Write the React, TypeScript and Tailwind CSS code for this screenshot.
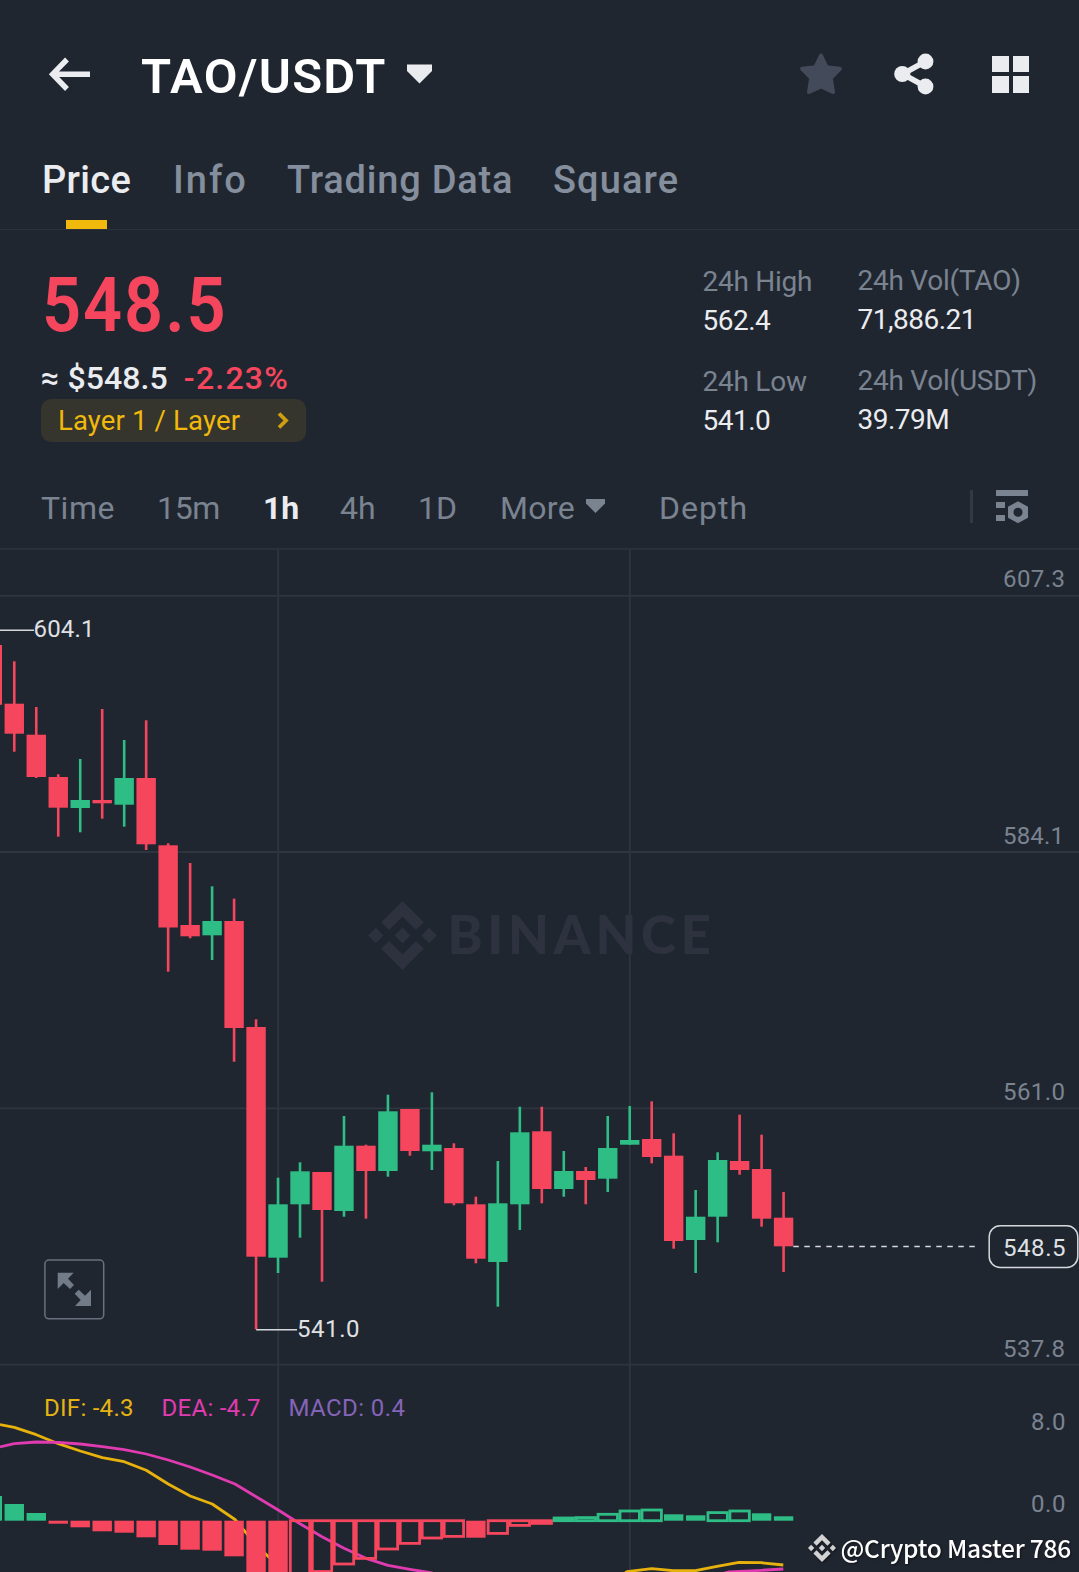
import React from "react";

const RED = "#f6465d";
const GREEN = "#2ebd85";
const GRID = "#2f353f";

const centerX = (i: number) => -7.7 + i * 21.98;

type Candle = [up: 0 | 1, high: number, top: number, bottom: number, low: number];

const candles: Candle[] = [
  [0, 645, 645, 704.8, 704.8],
  [0, 661.3, 703.7, 733.7, 751.7],
  [0, 707, 734.7, 777, 778],
  [0, 774.3, 777, 807.7, 836.7],
  [1, 759, 800, 808, 832.3],
  [0, 709, 800, 803.3, 818.7],
  [1, 740, 778, 804.7, 826.7],
  [0, 720.3, 778, 844.3, 850],
  [0, 843.3, 845.3, 927.5, 971.7],
  [0, 863, 925, 936.3, 938.3],
  [1, 886.3, 921, 935.3, 960],
  [0, 898.7, 921, 1028, 1061.7],
  [0, 1019.3, 1027, 1256.7, 1329.3],
  [1, 1177.7, 1204.3, 1257.7, 1273],
  [1, 1162.3, 1171.3, 1204.3, 1237.7],
  [0, 1172, 1172, 1210, 1281.7],
  [1, 1116, 1145.7, 1211, 1216.7],
  [0, 1144.7, 1145.7, 1171, 1218.7],
  [1, 1094.7, 1111.3, 1171, 1176.7],
  [0, 1109, 1109, 1151, 1155.7],
  [1, 1092.3, 1144.7, 1151.3, 1170],
  [0, 1143.3, 1148, 1203.3, 1205.3],
  [0, 1196.7, 1204.3, 1258.7, 1263.3],
  [1, 1161, 1203.3, 1262, 1306.7],
  [1, 1106.7, 1132.3, 1204.3, 1230],
  [0, 1106.7, 1131.3, 1189, 1203.3],
  [1, 1151, 1171, 1189, 1196.7],
  [0, 1167, 1171, 1180, 1204.3],
  [1, 1116, 1148, 1178.7, 1192],
  [1, 1106, 1140, 1144.7, 1144.7],
  [0, 1101.3, 1139, 1157, 1163.3],
  [0, 1133.3, 1155.7, 1241, 1248.7],
  [1, 1190, 1216.7, 1240, 1273],
  [1, 1152.3, 1160, 1216.7, 1242.3],
  [0, 1114.7, 1161, 1170, 1174.7],
  [0, 1134.7, 1169, 1218.7, 1226.7],
  [0, 1192, 1217.7, 1246.3, 1272],
];

type Bar = [y: number, hollow?: boolean];

const ZERO = 1520.7;
const bars: Bar[] = [
  [1496], [1504], [1513], [1523.7], [1527.3], [1531.3], [1532.7], [1537.3],
  [1545], [1549.7], [1550.7], [1556.3], [1590], [1590],
  [1590, true], [1571.5, true], [1564, true], [1558.4, true], [1549, true],
  [1543.4, true], [1538, true], [1536.4, true], [1537.7], [1533.4, true],
  [1525.4, true], [1523.4, true], [1518, true], [1517.6, true], [1514.3, true],
  [1511, true], [1510, true], [1514.3], [1515.3], [1512.6, true],
  [1511, true], [1513.3], [1516.3],
];

const dif =
  "0,1424.7 14.3,1427.3 36.3,1434.7 58.3,1443.7 80.3,1451 102.3,1457.7 124.2,1461.7 146.2,1470.3 168.2,1484 190.2,1496 212.2,1504 235,1519.5 256.2,1545 278.2,1566 300,1590 605,1590 627,1571.6 651.7,1568.7 673.3,1570.7 695.3,1570.7 717,1566.3 739,1562.3 761,1562.7 783.3,1565";
const dea =
  "0,1447 14.3,1443.7 36.3,1442 58.3,1442.3 80.3,1444 102.3,1446.7 124.2,1449.7 146.2,1454 168.2,1460 190.2,1467 212.2,1475 235,1484 256.2,1496.7 278.2,1510 300,1523.7 322,1536.7 344,1548.3 366,1558.3 388,1565.3 410,1569.3 432,1573 454,1580 700,1580 728.3,1572 761.5,1570.3 783.3,1569";

function BinanceMark({ className }: { className: string }) {
  return (
    <svg viewBox="0 0 126.61 126.61" className={className} fill="currentColor">
      <path d="M38.73 53.2 63.31 28.62 87.9 53.21 102.2 38.91 63.31 0 24.43 38.9Z" />
      <path d="M0 63.31 14.3 49 28.6 63.3 14.3 77.61Z" />
      <path d="M38.73 73.41 63.31 98 87.9 73.4 102.21 87.69 63.31 126.61 24.43 87.73Z" />
      <path d="M98 63.31 112.3 49 126.61 63.3 112.31 77.6Z" />
      <path d="M77.83 63.3 63.31 48.78 48.78 63.3 63.31 77.83Z" />
    </svg>
  );
}

function Header() {
  return (
    <header className="flex h-[148px] items-center pl-[48px] pr-[50px] text-[#eaecef]">
      <svg className="h-[36px] w-[43px]" viewBox="0 0 43 36" fill="none" stroke="currentColor" strokeWidth="5.4">
        <path d="M19 3.5 4.6 18.2 19 33M4 18.2H42" />
      </svg>
      <h1 className="ml-[50px] mt-[5px] w-[266px] whitespace-nowrap text-[49px] font-semibold leading-none tracking-[1.3px] text-white">
        TAO/USDT
      </h1>
      <svg className="h-[20px] w-[25px]" viewBox="0 0 25 20" fill="currentColor">
        <path d="M0 .5H25V7L12.5 19.5 0 7Z" />
      </svg>
      <div className="ml-auto flex items-center">
        <svg className="h-[42px] w-[42px] text-[#434a59]" viewBox="0 0 42 42" fill="currentColor" stroke="currentColor" strokeWidth="4" strokeLinejoin="round">
          <path d="M21 2.6 26.6 14.2 39.8 15.8 30.8 25 33 39 21 33.4 9 39 11.2 25 2.2 15.8 15.4 14.2Z" />
        </svg>
        <svg className="ml-[52px] h-[42px] w-[40px]" viewBox="0 0 40 42" fill="currentColor" stroke="currentColor">
          <path d="M31.5 8.5 8.5 21 31.5 33.5" fill="none" strokeWidth="5.5" />
          <circle cx="31.5" cy="8.5" r="7.9" strokeWidth="0" />
          <circle cx="8.3" cy="21" r="8.1" strokeWidth="0" />
          <circle cx="31.5" cy="33.5" r="7.9" strokeWidth="0" />
        </svg>
        <div className="ml-[58px] grid grid-cols-2 gap-[4px]">
          {[0, 1, 2, 3].map((n) => (
            <span key={n} className="h-[16.5px] w-[16.5px] bg-[#eaecef]" />
          ))}
        </div>
      </div>
    </header>
  );
}

function Tabs() {
  return (
    <nav className="flex h-[82px] border-b border-[#2c323c] pl-[42px] text-[38px] font-medium leading-[64px] text-[#848e9c]">
      <div className="flex w-[131px] flex-col">
        <span className="h-[72px] text-[#eaecef] tracking-[0.3px]">Price</span>
        <span className="ml-[24px] h-[9px] w-[41px] bg-[#f0b90b]" />
      </div>
      <span className="w-[114px] tracking-[2px]">Info</span>
      <span className="w-[265px] tracking-[0.8px]">Trading Data</span>
      <span className="ml-px tracking-[1.1px]">Square</span>
    </nav>
  );
}

function Stat({ label, value }: { label: string; value: string }) {
  return (
    <div className="whitespace-nowrap text-[28px] leading-[39px] tracking-[-0.25px]">
      <div className="text-[#7a8390]">{label}</div>
      <div className="text-[#eaecef] tracking-[-0.5px]">{value}</div>
    </div>
  );
}

function Summary() {
  return (
    <section className="flex h-[229px] pl-[41px]">
      <div className="w-[661.5px] pt-[33px]">
        <div className="ml-[1px] origin-left scale-x-[0.9] text-[76px] font-semibold leading-[84px] tracking-[2.2px] text-[#f6465d]">
          548.5
        </div>
        <div className="mt-[13px] flex h-[36px] items-center gap-[16px] text-[32px] font-medium leading-none">
          <span className="tracking-[0.1px] text-[#eaecef]">≈ $548.5</span>
          <span className="tracking-[1.2px] text-[#f6465d]">-2.23%</span>
        </div>
        <div className="mt-[3px] flex h-[43px] w-[265px] items-center justify-between rounded-[10px] bg-[#35342d] pl-[17px] pr-[17px] text-[27.5px] text-[#f0b90b]">
          <span className="tracking-[0.15px]">Layer 1 / Layer</span>
          <svg className="h-[17px] w-[12px]" viewBox="0 0 12 17" fill="none" stroke="#cf9f0f" strokeWidth="3.8">
            <path d="M2 1.5 9 8.5 2 15.5" />
          </svg>
        </div>
      </div>
      <div className="flex w-[155px] flex-col gap-[22px] pt-[31.5px]">
        <Stat label="24h High" value="562.4" />
        <Stat label="24h Low" value="541.0" />
      </div>
      <div className="flex flex-col gap-[22px] pt-[30.5px]">
        <Stat label="24h Vol(TAO)" value="71,886.21" />
        <Stat label="24h Vol(USDT)" value="39.79M" />
      </div>
    </section>
  );
}

function Intervals() {
  return (
    <nav className="flex h-[91px] items-center border-b-2 border-[#2a2f3a] pl-[41px] pr-[51px] pt-[9px] text-[32px] leading-none text-[#7a8390]">
      <span className="w-[116px] tracking-[0.5px]">Time</span>
      <span className="w-[106px] tracking-[-0.3px]">15m</span>
      <span className="w-[77px] font-bold text-[#eaecef]">1h</span>
      <span className="w-[78px]">4h</span>
      <span className="w-[82px]">1D</span>
      <span className="w-[86px] tracking-[0.3px]">More</span>
      <svg className="mb-[5px] mr-[54px] h-[14px] w-[19px]" viewBox="0 0 19 14" fill="currentColor">
        <path d="M0 0H19V4.5L9.5 14 0 4.5Z" />
      </svg>
      <span className="tracking-[1px]">Depth</span>
      <span className="mb-[3px] ml-auto mr-[23px] h-[33px] w-[3px] bg-[#333944]" />
      <svg className="mb-[3px] h-[33px] w-[32px]" viewBox="0 0 32 33" fill="currentColor">
        <path d="M0 0H32V6H0ZM0 12H9V18H0ZM0 25H9V31H0Z" />
        <path fillRule="evenodd" d="M22 11.3 32 16.8V27.7L22 33.2 12 27.7V16.8ZM22 17.7A4.5 4.5 0 1 0 22 26.8A4.5 4.5 0 1 0 22 17.7Z" />
      </svg>
    </nav>
  );
}

function Chart() {
  return (
    <svg className="block h-[1022px] w-[1079px]" viewBox="0 550 1079 1022" fontFamily="Roboto, sans-serif" fontSize="24">
      <g stroke={GRID} strokeWidth="1.8">
        {[595.8, 852, 1108.3, 1364.6].map((y) => (
          <path key={y} d={`M0 ${y}H1079`} />
        ))}
        <path d="M278.2 549V1572M629.8 549V1572" />
      </g>

      <text x="447.5" y="953.5" fill="#2d323e" fontSize="53" fontWeight="900" fontFamily="Lato, sans-serif" textLength="263.5">
        BINANCE
      </text>

      {candles.map(([up, high, top, bottom, low], i) => (
        <g key={i} fill={up ? GREEN : RED}>
          <rect x={centerX(i) - 1.3} y={high} width="2.6" height={low - high} />
          <rect x={centerX(i) - 9.7} y={top} width="19.4" height={bottom - top} />
        </g>
      ))}

      <g stroke="#d5d8dd" strokeWidth="1.5" fill="none">
        <path d="M0 630.3H34M256.2 1329.7H297" />
        <path d="M793.3 1246.5H975" strokeDasharray="5.5 5.5" />
        <rect x="989.2" y="1225.7" width="88.6" height="41.8" rx="11" fill="#202630" />
      </g>
      <g fill="#dfe1e5">
        <text x="33.5" y="637" textLength="61">604.1</text>
        <text x="297" y="1336.6" textLength="62.5">541.0</text>
        <text x="1003" y="1255.7" textLength="62.5">548.5</text>
      </g>
      <g fill="#7a8390">
        <text x="1003" y="587.4" textLength="62">607.3</text>
        <text x="1003" y="844" textLength="61">584.1</text>
        <text x="1003" y="1100" textLength="62">561.0</text>
        <text x="1003" y="1356.7" textLength="62">537.8</text>
        <text x="1031" y="1429.7" textLength="34.5">8.0</text>
        <text x="1031" y="1512.3" textLength="34.5">0.0</text>
      </g>

      <rect x="44.9" y="1260" width="58.8" height="58.8" rx="4" fill="none" stroke="#69717e" strokeWidth="1.5" />
      <g fill="#727b88">
        <path d="M57.7 1272.7H73.7L68 1278.7 74 1285 70 1289 63.7 1283 57.7 1289Z" />
        <path d="M91 1306H75L80.7 1300 74.7 1293.7 78.7 1289.7 85 1295.7 91 1289.7Z" />
      </g>

      <text x="44" y="1415.7" fill="#e5b314" textLength="89.5">DIF: -4.3</text>
      <text x="161.5" y="1415.7" fill="#e03bb0" textLength="99">DEA: -4.7</text>
      <text x="288.5" y="1415.7" fill="#8464b8" textLength="116.5">MACD: 0.4</text>

      <g fill="none" strokeWidth="2.8" strokeLinejoin="round">
        <polyline points={dif} stroke="#e8b20c" />
        <polyline points={dea} stroke="#e03bb0" />
      </g>

      {bars.map(([y, hollow], i) => {
        const color = y < ZERO ? GREEN : RED;
        return (
          <rect
            key={i}
            x={centerX(i) - 9.7}
            y={Math.min(y, ZERO)}
            width="19.4"
            height={Math.abs(y - ZERO)}
            fill={hollow ? "none" : color}
            stroke={hollow ? color : "none"}
            strokeWidth="2.8"
          />
        );
      })}
    </svg>
  );
}

export default function App() {
  return (
    <main className="flex h-[1572px] w-[1079px] flex-col overflow-hidden bg-[#202630] font-[Roboto,sans-serif]">
      <Header />
      <Tabs />
      <Summary />
      <Intervals />
      <div className="relative">
        <Chart />
        <BinanceMark className="absolute left-[367.5px] top-[350.5px] h-[69px] w-[69px] text-[#2d323e]" />
        <div className="absolute bottom-[7px] right-[8px] flex items-center gap-[4px] text-white [filter:drop-shadow(1px_1px_1px_#0008)]">
          <BinanceMark className="h-[28px] w-[28px] text-[#d2d2d2]" />
          <span className="whitespace-nowrap font-['Noto_Sans_CJK_SC',sans-serif] text-[24.5px] font-medium leading-[34px] tracking-[-0.22px]">@Crypto Master 786</span>
        </div>
      </div>
    </main>
  );
}
